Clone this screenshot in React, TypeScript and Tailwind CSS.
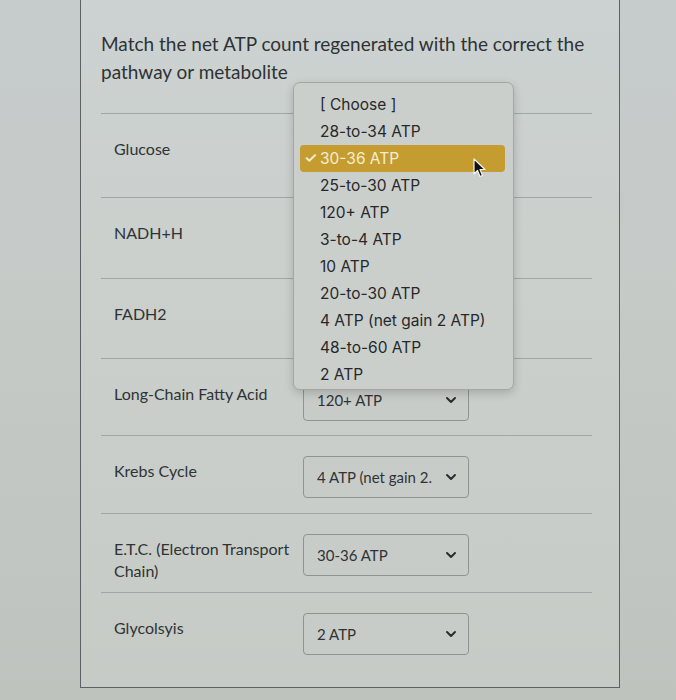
import { ChevronDown } from "lucide-react";

interface Row {
  label: string;
  value: string;
  h: string;
  covered?: boolean;
}

const rows: Row[] = [
  { label: "Glucose", value: "30-36 ATP", h: "h-[84px]", covered: true },
  { label: "NADH+H", value: "3-to-4 ATP", h: "h-[81px]", covered: true },
  { label: "FADH2", value: "2 ATP", h: "h-[80px]", covered: true },
  { label: "Long-Chain Fatty Acid", value: "120+ ATP", h: "h-[77px]" },
  { label: "Krebs Cycle", value: "4 ATP (net gain 2.", h: "h-[78px]" },
  { label: "E.T.C. (Electron Transport Chain)", value: "30-36 ATP", h: "h-[79px]" },
  { label: "Glycolsyis", value: "2 ATP", h: "h-[96px]" },
];

const options = [
  "[ Choose ]",
  "28-to-34 ATP",
  "30-36 ATP",
  "25-to-30 ATP",
  "120+ ATP",
  "3-to-4 ATP",
  "10 ATP",
  "20-to-30 ATP",
  "4 ATP (net gain 2 ATP)",
  "48-to-60 ATP",
  "2 ATP",
];

const SelectBox = ({ value, covered }: { value: string; covered?: boolean }) => (
  <div className="w-[166px] h-[42px] mt-[20px] flex items-center justify-between pl-[13px] pr-[9px] border border-[#8e9492] rounded-[4px] bg-[#c8ccc9]">
    <span className={covered ? "invisible" : "text-[15px] text-[#2f3335] whitespace-nowrap overflow-hidden"}>
      {value}
    </span>
    <ChevronDown className="w-4 h-4 text-[#2a2d2f] shrink-0" strokeWidth={3} />
  </div>
);

// native menu opened over the Glucose select
const OptionsMenu = () => (
  <div className="absolute left-[212px] top-[82px] w-[221px] h-[308px] pt-[8px] rounded-[7px] border border-[#a3a8a5] bg-[#cbcfcc] shadow-[0_3px_10px_rgba(0,0,0,0.18)] font-['Inter',sans-serif]">
    {options.map((opt) => {
      const selected = opt === "30-36 ATP";
      return (
        <div
          key={opt}
          className={
            selected
              ? "relative h-[27px] ml-[6px] mr-[8px] pl-[20px] flex items-center rounded-[4px] bg-[#c59c30] text-[#f3eed6] text-[15.5px]"
              : "h-[27px] pl-[26px] flex items-center text-[15.5px] text-[#262829]"
          }
        >
          {selected && <span className="absolute left-[4px] text-[15px] font-semibold">✓</span>}
          {opt}
        </div>
      );
    })}
  </div>
);

const Cursor = () => (
  <svg className="absolute left-[392px] top-[158px]" width="14" height="20" viewBox="0 0 14 20">
    <path d="M1 1 L1 16 L4.5 12.5 L7 18.5 L9.5 17.5 L7 11.5 L12 11.5 Z" fill="#111" stroke="#f4f4f4" strokeWidth="1.2" strokeLinejoin="round" />
  </svg>
);

export default function App() {
  return (
    <div className="h-[700px] w-[676px] bg-gradient-to-b from-[#c6cccc] via-[#c5c9c6] to-[#bfc3be] font-['Lato',sans-serif] text-[#2f3336]">
      <div className="relative ml-[80px] w-[540px] h-[688px] border-x border-b border-[#5c6163] bg-gradient-to-b from-[#ccd2d1] via-[#cacfcb] to-[#c7cbc6]">
        <div className="pt-[30px] pl-[20px] pr-[27px]">
          <p className="text-[19px] leading-[28px] text-[#2e3235]">
            Match the net ATP count regenerated with the correct the pathway or metabolite
          </p>
          <div className="mt-[27px]">
            {rows.map((row) => (
              <div key={row.label} className={`${row.h} flex border-t border-[#a0a6a3]`}>
                <div className="w-[202px] pl-[13px] pr-[10px] pt-[24px] text-[16px] leading-[22px]">
                  {row.label}
                </div>
                <SelectBox value={row.value} covered={row.covered} />
              </div>
            ))}
          </div>
        </div>
        <OptionsMenu />
        <Cursor />
      </div>
    </div>
  );
}
